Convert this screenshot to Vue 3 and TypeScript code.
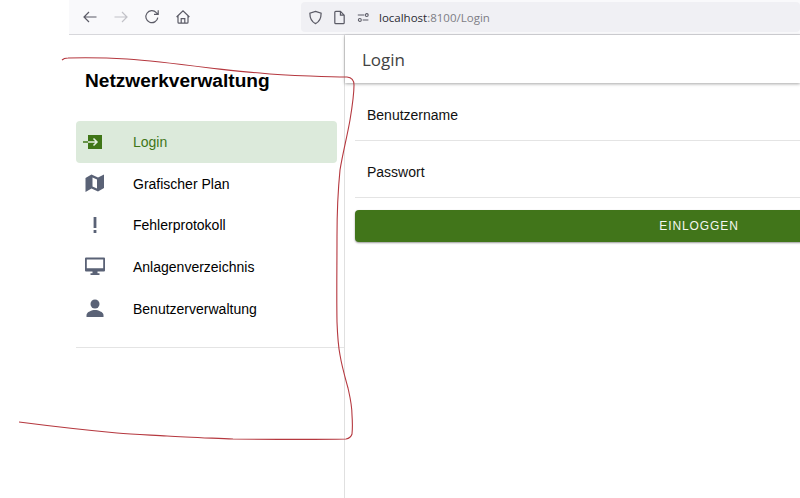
<script setup lang="ts">
interface NavItem {
  label: string
  icon: string
  active?: boolean
}
const items: NavItem[] = [
  { label: 'Login', icon: 'login', active: true },
  { label: 'Grafischer Plan', icon: 'map' },
  { label: 'Fehlerprotokoll', icon: 'alert' },
  { label: 'Anlagenverzeichnis', icon: 'desktop' },
  { label: 'Benutzerverwaltung', icon: 'person' },
]
</script>

<template>
  <div class="page">
    <div class="gutter"></div>
    <div class="window">
      <header class="toolbar">
        <div class="nav-buttons">
          <svg class="tb-icon" viewBox="0 0 16 16"><path d="M14.500 8H2M7 3 2 8l5 5" /></svg>
          <svg class="tb-icon faded" viewBox="0 0 16 16"><path d="M1.500 8H14M9 3l5 5-5 5" /></svg>
          <svg class="tb-icon" viewBox="0 0 16 16"><path d="M13.800 8.600A6 6 0 1 1 12.300 3.600L14 5.200M14.200 1.200v4.200H10" /></svg>
          <svg class="tb-icon" viewBox="0 0 16 16"><path d="M1.600 8 8 1.800 14.400 8M3 7v6.200a1 1 0 0 0 1 1h8a1 1 0 0 0 1-1V7M6.200 14.200V9.600h3.600v4.600" /></svg>
        </div>
        <div class="urlbar">
          <svg class="url-icon" viewBox="0 0 16 16"><path d="M8 1.500 14 3.400c0 5.600-1.600 9-6 11.100-4.400-2.100-6-5.500-6-11.100Z" /></svg>
          <svg class="url-icon" viewBox="0 0 16 16"><path d="M3 2.500a1 1 0 0 1 1-1h5l4 4v8a1 1 0 0 1-1 1H4a1 1 0 0 1-1-1ZM9 1.500v4h4" /></svg>
          <svg class="url-icon small" viewBox="0 0 16 16"><path d="M1 5h8M14 11H7" /><circle cx="12" cy="5" r="1.800" /><circle cx="3.500" cy="11" r="1.800" /></svg>
          <span class="url"><span class="host">localhost</span>:8100/Login</span>
        </div>
      </header>
      <div class="app">
        <aside class="sidebar">
          <h1 class="brand">Netzwerkverwaltung</h1>
          <ul class="menu">
            <li v-for="item in items" :key="item.label" class="menu-item" :class="{ active: item.active }">
              <span class="menu-icon">
                <svg v-if="item.icon === 'login'" viewBox="0 0 20 20">
                  <rect class="fill" x="3" y="3" width="14" height="14" />
                  <path class="arrow-line" d="M-2 10h5" />
                  <path class="arrow-head" d="M3 10h9M8.500 6.500 12 10l-3.500 3.500" />
                </svg>
                <svg v-else-if="item.icon === 'map'" viewBox="0 0 20 20">
                  <path class="fill" d="M.5 4 6.500.5 13 3.500 19 .5V14L13 17.500 6.500 14.500.5 18Z" />
                  <path class="map-fold" d="M7.500 3.500 12 5.500V14.500L7.500 12.500Z" />
                </svg>
                <svg v-else-if="item.icon === 'alert'" viewBox="0 0 20 20">
                  <rect class="fill" x="8.600" y="2" width="2.800" height="11" />
                  <rect class="fill" x="8.600" y="15" width="2.800" height="3" />
                </svg>
                <svg v-else-if="item.icon === 'desktop'" viewBox="0 0 20 20">
                  <path class="fill" d="M1 .5h18a1 1 0 0 1 1 1v12a1 1 0 0 1-1 1H12.500v1.800H14.500V18h-9v-1.700h2V14.500H1a1 1 0 0 1-1-1V1.500a1 1 0 0 1 1-1Zm.8 2V11.300H18.200V2.500Z" />
                </svg>
                <svg v-else viewBox="0 0 20 20">
                  <circle class="fill" cx="10" cy="5" r="4.500" />
                  <path class="fill" d="M1.500 18v-2c0-3 5.500-5 8.500-5s8.500 2 8.500 5v2Z" />
                </svg>
              </span>
              <span class="menu-label">{{ item.label }}</span>
            </li>
          </ul>
        </aside>
        <main class="content">
          <div class="title-bar">Login</div>
          <form class="form" @submit.prevent>
            <div class="field">Benutzername</div>
            <div class="field">Passwort</div>
            <button class="submit" type="submit">EINLOGGEN</button>
          </form>
        </main>
      </div>
    </div>
    <svg class="scribble" viewBox="0 0 800 498">
      <path d="M62 60C63 59 65 58 68 58C90 57.500 110 58 127 59C140 60 150 61 160 62C178 64 194 66 210 68C228 70 244 72 260 73C278 75 294 75.500 310 76C322 76.500 335 77 347 77C352 77.500 354 80 354 85C354 95 352 108 350 120C347 137 343 152 340 170C338 190 337 215 337 237C337 265 336.500 295 337 322C337.500 335 338 345 340 355C342 367 345 377 348 388C350 397 352 405 352 415C352.500 422 352.500 429 352 434C351 437.500 349 438.500 346 439C325 439.500 280 439.500 233 439C210 438 188 437.500 167 436C150 435 133 434.500 117 433C85 430 50 426 19 422" />
    </svg>
  </div>
</template>

<style>
html, body {
  margin: 0;
  background: #fff;
}
</style>

<style scoped>
.page {
  position: relative;
  display: flex;
  width: 800px;
  height: 498px;
  overflow: hidden;
  background: #fff;
  font-family: "Liberation Sans", Arial, sans-serif;
}
.gutter {
  flex: 0 0 69px;
}
.window {
  flex: 1;
  display: flex;
  flex-direction: column;
  min-width: 0;
}
.toolbar {
  flex: 0 0 35px;
  box-sizing: border-box;
  display: flex;
  align-items: center;
  background: #f9f9fb;
  border-bottom: 1px solid #d7d7db;
  padding-left: 13px;
}
.nav-buttons {
  display: flex;
  gap: 15px;
  width: 219px;
}
.tb-icon {
  width: 16px;
  height: 16px;
  fill: none;
  stroke: #5b5b66;
  stroke-width: 1.200;
}
.tb-icon.faded {
  stroke: #c2c2c8;
}
.urlbar {
  flex: 1;
  height: 30px;
  display: flex;
  align-items: center;
  gap: 9px;
  padding-left: 7px;
  background: #f0f0f4;
  border-radius: 4px;
}
.url-icon {
  width: 15px;
  height: 15px;
  fill: none;
  stroke: #5b5b66;
  stroke-width: 1.300;
}
.url-icon.small {
  width: 13px;
  height: 13px;
  margin-left: 1px;
}
.url {
  font-family: "Open Sans", sans-serif;
  font-size: 11.500px;
  color: #7d7d85;
}
.host {
  color: #2b2b33;
}
.app {
  flex: 1;
  display: flex;
  min-height: 0;
}
.sidebar {
  flex: 0 0 276px;
  box-sizing: border-box;
  border-right: 1px solid #e0e0e0;
  padding-left: 7px;
}
.brand {
  margin: 35px 0 0 9px;
  font-size: 19.100px;
  line-height: 22px;
  font-weight: 700;
  color: #000;
}
.menu {
  list-style: none;
  margin: 29px 0 0;
  padding: 0 7px 18px 0;
  border-bottom: 1px solid #e4e4e4;
}
.menu-item {
  height: 41.700px;
  display: flex;
  align-items: center;
  padding-left: 9px;
  border-radius: 4px;
  font-size: 14px;
  color: #000;
}
.menu-item.active {
  background: #dceadb;
  color: #3f7617;
}
.menu-icon {
  flex: 0 0 20px;
  height: 20px;
  display: flex;
  align-items: center;
  justify-content: center;
  margin-right: 28px;
}
.menu-icon svg {
  width: 20px;
  height: 20px;
  overflow: visible;
}
.fill {
  fill: #5a6276;
}
.map-fold {
  fill: #fff;
}
.active .fill {
  fill: #3f7617;
}
.arrow-line,
.arrow-head {
  fill: none;
  stroke-width: 1.500;
}
.arrow-line {
  stroke: #3f7617;
}
.arrow-head {
  stroke: #e6f0e2;
}
.menu-label {
  white-space: nowrap;
}
.content {
  flex: 1;
  min-width: 0;
}
.title-bar {
  height: 48px;
  box-sizing: border-box;
  padding-left: 17px;
  display: flex;
  align-items: center;
  font-family: "Open Sans", sans-serif;
  font-size: 17px;
  color: #424242;
  box-shadow: 0 1px 3px rgba(0, 0, 0, 0.350);
  position: relative;
}
.form {
  display: flex;
  flex-direction: column;
  align-items: flex-start;
  padding-top: 1px;
}
.field {
  align-self: stretch;
  height: 57px;
  box-sizing: border-box;
  margin-left: 10px;
  padding: 6px 0 0 12px;
  display: flex;
  align-items: center;
  border-bottom: 1px solid #e4e4e4;
  font-size: 14px;
  color: #111;
}
.submit {
  flex: none;
  width: 688px;
  margin: 12px 0 0 10px;
  height: 32px;
  border: 0;
  border-radius: 4px;
  background: #41751a;
  color: #f4f7f0;
  font-family: "Liberation Sans", Arial, sans-serif;
  font-size: 12px;
  letter-spacing: 0.900px;
  box-shadow: 0 1px 2px rgba(0, 0, 0, 0.400);
}
.scribble {
  position: absolute;
  inset: 0;
  width: 800px;
  height: 498px;
  pointer-events: none;
  fill: none;
  stroke: #b5383f;
  stroke-width: 1.100;
}
</style>
